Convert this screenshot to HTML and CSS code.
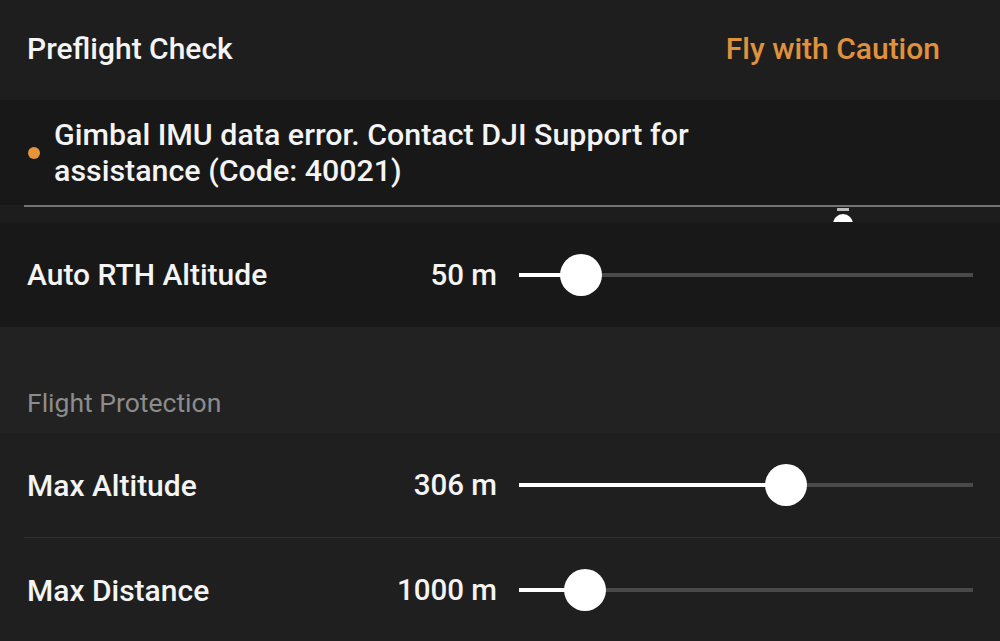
FILE: index.html
```html
<!DOCTYPE html>
<html>
<head>
<meta charset="utf-8">
<link rel="stylesheet" href="styles.css">
</head>
<body>
<div class="screen">
  <div class="header">
    <span class="title">Preflight Check</span>
    <span class="status">Fly with Caution</span>
  </div>
  <div class="warning">
    <span class="dot"></span>
    <p class="warning-text">Gimbal IMU data error. Contact DJI Support for<br>assistance (Code: 40021)</p>
  </div>
  <div class="divider"></div>
  <div class="peek">
    <span class="peek-dash"></span>
    <span class="peek-thumb"></span>
  </div>
  <div class="row row-dark">
    <span class="label">Auto RTH Altitude</span>
    <span class="value">50 m</span>
    <div class="slider">
      <div class="track"></div>
      <div class="fill" style="width:13.7%"></div>
      <div class="thumb" style="left:13.7%"></div>
    </div>
  </div>
  <div class="section">
    <span class="section-label">Flight Protection</span>
  </div>
  <div class="row">
    <span class="label">Max Altitude</span>
    <span class="value">306 m</span>
    <div class="slider">
      <div class="track"></div>
      <div class="fill" style="width:58.8%"></div>
      <div class="thumb" style="left:58.8%"></div>
    </div>
  </div>
  <div class="row-sep"></div>
  <div class="row">
    <span class="label">Max Distance</span>
    <span class="value">1000 m</span>
    <div class="slider">
      <div class="track"></div>
      <div class="fill" style="width:14.5%"></div>
      <div class="thumb" style="left:14.5%"></div>
    </div>
  </div>
</div>
</body>
</html>
```
FILE: styles.css
```css
html, body {
  margin: 0;
  padding: 0;
  background: #1f1f1f;
}
.screen {
  width: 1000px;
  height: 641px;
  overflow: hidden;
  font-family: Roboto, "Liberation Sans", sans-serif;
  font-weight: 500;
  color: #f4f4f4;
  background: #1f1f1f;
}
.header {
  height: 100px;
  box-sizing: border-box;
  padding: 0 60px 4px 27px;
  display: flex;
  align-items: center;
  justify-content: space-between;
  background: #1e1e1e;
  font-size: 30px;
}
.status {
  color: #e0913c;
}
.warning {
  height: 105px;
  box-sizing: border-box;
  padding: 0 0 0 28px;
  display: flex;
  align-items: center;
  gap: 14px;
  background: #181818;
}
.dot {
  width: 12px;
  height: 12px;
  border-radius: 50%;
  background: #e8943d;
  flex: none;
  margin-top: 1px;
}
.warning-text {
  margin: 0;
  font-size: 30.4px;
  line-height: 36px;
}
.divider {
  height: 2px;
  margin-left: 24px;
  background: #727272;
}
.peek {
  position: relative;
  height: 15px;
  overflow: hidden;
  background: #1d1d1d;
}
.peek-dash {
  position: absolute;
  left: 837px;
  top: 1px;
  width: 12px;
  height: 3px;
  background: #bdbdbd;
}
.peek-thumb {
  position: absolute;
  left: 833px;
  top: 7px;
  width: 20px;
  height: 20px;
  border-radius: 50%;
  background: #fff;
}
.row {
  height: 104px;
  box-sizing: border-box;
  padding: 0 27px;
  display: grid;
  grid-template-columns: 1fr auto 454px;
  column-gap: 22px;
  align-items: center;
  background: #1f1f1f;
  font-size: 30px;
}
.value {
  text-align: right;
  font-size: 29.5px;
}
.row-dark {
  height: 105px;
  background: #181818;
}
.row-sep {
  height: 1px;
  margin-left: 24px;
  background: #2f2f2f;
}
.slider {
  position: relative;
  height: 44px;
}
.track {
  position: absolute;
  left: 0;
  right: 0;
  top: 20px;
  height: 4px;
  background: #4a4a4a;
}
.fill {
  position: absolute;
  left: 0;
  top: 20px;
  height: 4px;
  background: #ffffff;
}
.thumb {
  position: absolute;
  top: 1px;
  width: 42px;
  height: 42px;
  margin-left: -21px;
  border-radius: 50%;
  background: #ffffff;
}
.section {
  height: 106px;
  box-sizing: border-box;
  padding: 0 27px 15px;
  display: flex;
  align-items: flex-end;
  background: #222222;
}
.section-label {
  font-size: 26.5px;
  font-weight: 400;
  color: #8c8c8c;
}
```
